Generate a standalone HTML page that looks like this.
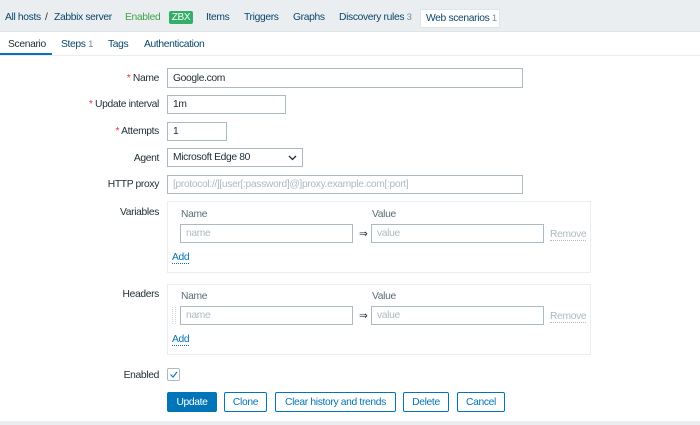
<!DOCTYPE html><html><head><style>
*{box-sizing:border-box;margin:0;padding:0}
body{width:700px;height:425px;position:relative;background:#fff;font-family:"Liberation Sans",sans-serif;font-size:10.3px;letter-spacing:-0.35px;color:#1f2c33;overflow:hidden}
.a{position:absolute;white-space:nowrap}
.l{color:#0a466a}
.c{color:#768d99;font-size:9.5px}
.lab{position:absolute;right:541px;white-space:nowrap}
.req:before{content:"* ";color:#e33734}
.in{position:absolute;border:1px solid #acbbc2;background:#fff;padding:0 5px;display:flex;align-items:center}
.ph{color:#acbbc2}
.box{position:absolute;border:1px solid #ebeef0;left:167px;width:424px}
.btn{position:absolute;top:392px;height:20px;border:1px solid #0275b8;color:#0275b8;border-radius:2px;display:flex;align-items:center;justify-content:center;background:#fff}
.add{position:absolute;color:#0275b8;border-bottom:1px dotted #0275b8;line-height:11px}
.rm{position:absolute;color:#acbbc2;border-bottom:1px dotted #acbbc2;line-height:11px}
</style></head><body>
<div class="a" style="left:0;top:0;width:700px;height:32px;background:#ebeef0;border-bottom:1px solid #dfe4e7"></div>
<div class="a l" style="left:5px;top:12px">All hosts</div>
<div class="a" style="left:45px;top:12px">/</div>
<div class="a l" style="left:54px;top:12px">Zabbix server</div>
<div class="a" style="left:125px;top:12px;color:#429e47">Enabled</div>
<div class="a" style="left:169px;top:11px;width:24px;height:13px;background:#34af67;color:#fff;font-size:10px;text-align:center;line-height:13px;border-radius:2px">ZBX</div>
<div class="a l" style="left:206px;top:12px">Items</div>
<div class="a l" style="left:244px;top:12px">Triggers</div>
<div class="a l" style="left:293px;top:12px">Graphs</div>
<div class="a l" style="left:339px;top:12px">Discovery rules <span class="c">3</span></div>
<div class="a" style="left:420px;top:9px;width:80px;height:19px;background:#fff;border:1px solid #dfe4e7;padding:3px 0 0 5px;color:#0a466a">Web scenarios <span class="c">1</span></div>
<div class="a" style="left:8px;top:39px">Scenario</div>
<div class="a" style="left:0;top:53px;width:52px;height:2px;background:#0275b8"></div>
<div class="a l" style="left:61px;top:39px">Steps <span class="c">1</span></div>
<div class="a l" style="left:108px;top:39px">Tags</div>
<div class="a l" style="left:144px;top:39px">Authentication</div>
<div class="a" style="left:0;top:55px;width:700px;height:1px;background:#ebeef0"></div>

<div class="lab req" style="top:73px">Name</div>
<div class="in" style="left:167px;top:68px;width:356px;height:20px">Google.com</div>
<div class="lab req" style="top:99px">Update interval</div>
<div class="in" style="left:167px;top:95px;width:119px;height:19px">1m</div>
<div class="lab req" style="top:126px">Attempts</div>
<div class="in" style="left:167px;top:122px;width:60px;height:19px">1</div>
<div class="lab" style="top:153px">Agent</div>
<div class="in" style="left:167px;top:148px;width:136px;height:19px">Microsoft Edge 80<svg style="position:absolute;right:5px;top:6px" width="9" height="6"><path d="M1 1l3.5 3.5L8 1" stroke="#1f2c33" fill="none" stroke-width="1.3"/></svg></div>
<div class="lab" style="top:179px">HTTP proxy</div>
<div class="in ph" style="left:167px;top:175px;width:356px;height:19px">[protocol://][user[:password]@]proxy.example.com[:port]</div>

<div class="lab" style="top:207px">Variables</div>
<div class="box" style="top:201px;height:72px"></div>
<div class="a" style="left:181px;top:209px;color:#5a6d77">Name</div>
<div class="a" style="left:372px;top:209px;color:#5a6d77">Value</div>
<div class="in ph" style="left:180px;top:224px;width:173px;height:19px">name</div>
<div class="a" style="left:359px;top:228px">⇒</div>
<div class="in ph" style="left:371px;top:224px;width:173px;height:19px">value</div>
<div class="rm" style="left:550px;top:229px">Remove</div>
<div class="add" style="left:172px;top:252px">Add</div>

<div class="lab" style="top:289px">Headers</div>
<div class="box" style="top:284px;height:71px"></div>
<div class="a" style="left:181px;top:291px;color:#5a6d77">Name</div>
<div class="a" style="left:372px;top:291px;color:#5a6d77">Value</div>
<div class="a" style="left:172px;top:307px;width:4px;height:17px;border-left:1px dotted #cfd7db;border-right:1px dotted #cfd7db"></div>
<div class="in ph" style="left:180px;top:306px;width:173px;height:19px">name</div>
<div class="a" style="left:359px;top:310px">⇒</div>
<div class="in ph" style="left:371px;top:306px;width:173px;height:19px">value</div>
<div class="rm" style="left:550px;top:311px">Remove</div>
<div class="add" style="left:172px;top:334px">Add</div>

<div class="lab" style="top:370px">Enabled</div>
<div class="a" style="left:167px;top:368px;width:13px;height:13px;border:1px solid #acbbc2;border-radius:2px"><svg width="11" height="11" style="position:absolute;left:0;top:0"><path d="M2.5 5.5l2.5 2.5 4-5" stroke="#0275b8" fill="none" stroke-width="1.1"/></svg></div>

<div class="btn" style="left:167px;width:50px;background:#0275b8;color:#fff">Update</div>
<div class="btn" style="left:224px;width:43px">Clone</div>
<div class="btn" style="left:275px;width:121px">Clear history and trends</div>
<div class="btn" style="left:403px;width:46px">Delete</div>
<div class="btn" style="left:457px;width:48px">Cancel</div>
<div class="a" style="left:0;top:421px;width:700px;height:4px;background:#ebeef0"></div>
</body></html>
